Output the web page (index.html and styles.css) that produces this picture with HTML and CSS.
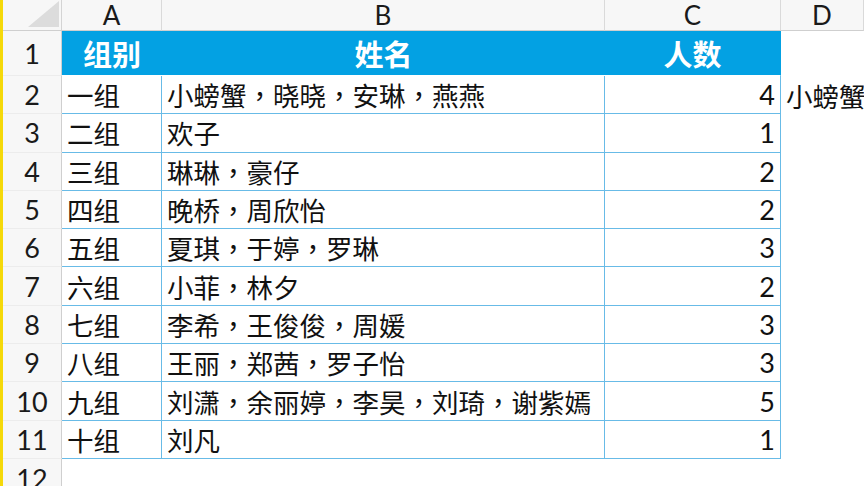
FILE: index.html
```html
<!DOCTYPE html>
<html lang="zh-CN">
<head>
<meta charset="utf-8">
<title>分组表</title>
<link rel="stylesheet" href="styles.css">
</head>
<body>
<div class="app">
  <div class="strip"></div>
  <div class="sheet">
    <div class="corner"><span class="tri"></span></div>
    <div class="colh">A</div>
    <div class="colh">B</div>
    <div class="colh">C</div>
    <div class="colh">D</div>

    <div class="rowh">1</div>
    <div class="th">组别</div>
    <div class="th">姓名</div>
    <div class="th last">人数</div>
    <div class="out"></div>

    <div class="rowh">2</div>
    <div class="cell">一组</div>
    <div class="cell">小螃蟹<span class="p">，</span>晓晓<span class="p">，</span>安琳<span class="p">，</span>燕燕</div>
    <div class="cell num">4</div>
    <div class="out">小螃蟹<span class="p">，</span>晓晓<span class="p">，</span>安琳<span class="p">，</span>燕燕</div>

    <div class="rowh">3</div>
    <div class="cell">二组</div>
    <div class="cell">欢子</div>
    <div class="cell num">1</div>
    <div class="out"></div>

    <div class="rowh">4</div>
    <div class="cell">三组</div>
    <div class="cell">琳琳<span class="p">，</span>豪仔</div>
    <div class="cell num">2</div>
    <div class="out"></div>

    <div class="rowh">5</div>
    <div class="cell">四组</div>
    <div class="cell">晚桥<span class="p">，</span>周欣怡</div>
    <div class="cell num">2</div>
    <div class="out"></div>

    <div class="rowh">6</div>
    <div class="cell">五组</div>
    <div class="cell">夏琪<span class="p">，</span>于婷<span class="p">，</span>罗琳</div>
    <div class="cell num">3</div>
    <div class="out"></div>

    <div class="rowh">7</div>
    <div class="cell">六组</div>
    <div class="cell">小菲<span class="p">，</span>林夕</div>
    <div class="cell num">2</div>
    <div class="out"></div>

    <div class="rowh">8</div>
    <div class="cell">七组</div>
    <div class="cell">李希<span class="p">，</span>王俊俊<span class="p">，</span>周媛</div>
    <div class="cell num">3</div>
    <div class="out"></div>

    <div class="rowh">9</div>
    <div class="cell">八组</div>
    <div class="cell">王丽<span class="p">，</span>郑茜<span class="p">，</span>罗子怡</div>
    <div class="cell num">3</div>
    <div class="out"></div>

    <div class="rowh">10</div>
    <div class="cell">九组</div>
    <div class="cell">刘潇<span class="p">，</span>余丽婷<span class="p">，</span>李昊<span class="p">，</span>刘琦<span class="p">，</span>谢紫嫣</div>
    <div class="cell num">5</div>
    <div class="out"></div>

    <div class="rowh">11</div>
    <div class="cell">十组</div>
    <div class="cell">刘凡</div>
    <div class="cell num">1</div>
    <div class="out"></div>

    <div class="rowh">12</div>
    <div class="blank"></div>
    <div class="blank"></div>
    <div class="blank"></div>
    <div class="blank"></div>
  </div>
</div>
</body>
</html>
```

FILE: styles.css
```css
html, body {
  margin: 0;
  padding: 0;
  background: #ffffff;
  overflow: hidden;
}

.app {
  display: flex;
  width: 864px;
  height: 486px;
  overflow: hidden;
  font-family: Lato, "Noto Sans CJK SC", sans-serif;
  color: #111;
}

.strip {
  flex: 0 0 3px;
  background: #f5d90a;
}

.sheet {
  flex: 1;
  min-width: 0;
  display: grid;
  grid-template-columns: 59px 100px 443px 176px minmax(0, 1fr);
  grid-template-rows: 31px 45px repeat(10, 38.3px) 40px;
  overflow: hidden;
}

.corner {
  background: #f7f7f7;
  border-right: 1px solid #d4d4d4;
  border-bottom: 1px solid #cfcfcf;
  display: flex;
  justify-content: flex-end;
  align-items: flex-end;
  padding: 0 2px 3px 0;
}

.tri {
  width: 31px;
  height: 26px;
  background: #dcdcdc;
  clip-path: polygon(100% 0, 100% 100%, 0 100%);
}

.colh {
  background: #f7f7f7;
  border-right: 1px solid #dadada;
  border-bottom: 1px solid #cfcfcf;
  display: flex;
  align-items: center;
  justify-content: center;
  font-size: 26px;
  color: #1a1a1a;
  min-width: 0;
}

.rowh {
  background: #f7f7f7;
  border-right: 1px solid #cfcfcf;
  border-bottom: 1px solid #ececec;
  display: flex;
  align-items: center;
  justify-content: center;
  font-size: 27px;
  color: #1a1a1a;
}

.th {
  background: #03a1e3;
  color: #ffffff;
  font-weight: 700;
  font-size: 29px;
  display: flex;
  align-items: center;
  justify-content: center;
  border-bottom: 1px solid #ffffff;
}

.th.last {
  border-right: 1px solid #03a1e3;
}

.cell {
  border-right: 1px solid #68bbe7;
  border-bottom: 1px solid #68bbe7;
  display: flex;
  align-items: center;
  padding-left: 5px;
  font-size: 26.5px;
  white-space: nowrap;
  color: #111;
}

.cell.num {
  justify-content: flex-end;
  padding-left: 0;
  padding-right: 5px;
  font-size: 27px;
}

.p {
  font-family: "Noto Sans CJK TC", "Noto Sans CJK SC", sans-serif;
}

.out {
  display: flex;
  align-items: center;
  padding-left: 5px;
  font-size: 26.5px;
  white-space: nowrap;
  min-width: 0;
  overflow: visible;
  color: #111;
}

.blank {
  background: #ffffff;
}
```
